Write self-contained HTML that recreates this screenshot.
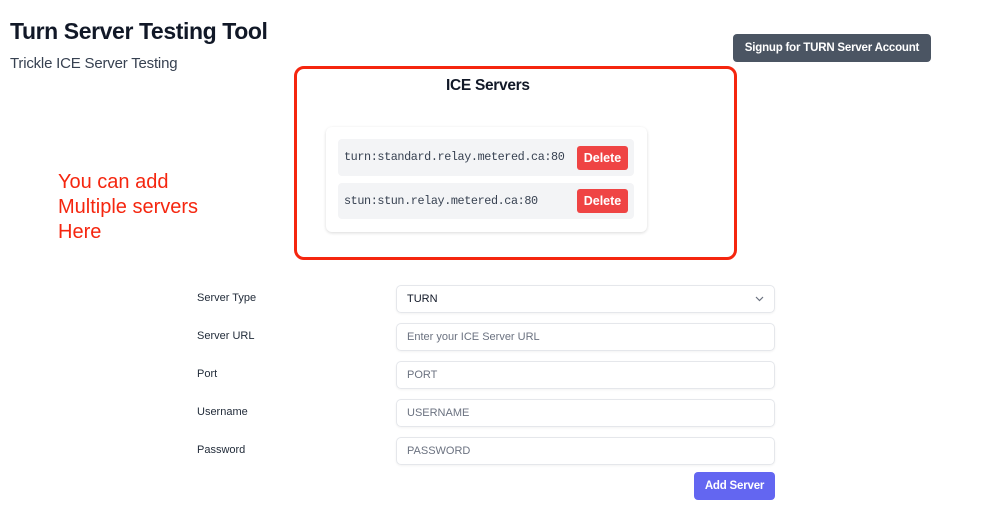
<!DOCTYPE html>
<html><head><style>
*{box-sizing:border-box;margin:0;padding:0}
body{width:1000px;height:515px;background:#fff;font-family:"Liberation Sans",sans-serif;position:relative;overflow:hidden;color:#111827}
.a{position:absolute}
h1{position:absolute;left:10px;top:18px;font-size:23px;font-weight:bold;color:#111827;letter-spacing:-0.4px}
.sub{left:10px;top:55px;font-size:15px;color:#374151;letter-spacing:-0.2px}
.signup{left:733px;top:34px;width:198px;height:28px;background:#4b5563;color:#fff;border-radius:4px;font-size:11.5px;font-weight:bold;text-align:center;line-height:28px;letter-spacing:-0.2px}
.red{left:294px;top:66px;width:443px;height:194px;border:3px solid #f5260f;border-radius:10px}
.ice{left:446px;top:77px;font-size:15.5px;font-weight:bold;letter-spacing:-0.3px}
.card{left:326px;top:127px;width:321px;height:105px;border-radius:6px;box-shadow:0 1px 3px rgba(0,0,0,.15)}
.row{left:338px;width:296px;background:#f3f4f6;border-radius:4px;font-family:"Liberation Mono",monospace;font-size:11.8px;letter-spacing:-0.4px;color:#374151;padding-left:6px}
.del{left:577px;width:51px;height:24px;background:#ef4444;color:#fff;border-radius:3px;font-size:12.5px;font-weight:bold;text-align:center;line-height:24px}
.note{left:58px;top:170px;font-size:20px;color:#f5260f;line-height:25px}
.lbl{left:197px;font-size:11px;color:#1f2937}
.inp{left:396px;width:379px;height:28px;border:1px solid #e5e7eb;border-radius:5px;font-size:11px;color:#6b7280;padding-left:10px;line-height:26px;box-shadow:0 1px 2px rgba(0,0,0,.05)}
.btn{left:694px;top:472px;width:81px;height:28px;background:#6366f1;color:#fff;border-radius:4px;font-size:11.5px;font-weight:bold;text-align:center;line-height:28px;letter-spacing:-0.2px}
</style></head><body>
<h1>Turn Server Testing Tool</h1>
<div class="a sub">Trickle ICE Server Testing</div>
<div class="a signup">Signup for TURN Server Account</div>
<div class="a red"></div>
<div class="a ice">ICE Servers</div>
<div class="a card"></div>
<div class="a row" style="top:139px;height:37px;line-height:37px">turn:standard.relay.metered.ca:80</div>
<div class="a del" style="top:146px">Delete</div>
<div class="a row" style="top:183px;height:36px;line-height:36px">stun:stun.relay.metered.ca:80</div>
<div class="a del" style="top:189px">Delete</div>
<div class="a note">You can add<br>Multiple servers<br>Here</div>
<div class="a lbl" style="top:292px">Server Type</div>
<div class="a lbl" style="top:330px">Server URL</div>
<div class="a lbl" style="top:368px">Port</div>
<div class="a lbl" style="top:406px">Username</div>
<div class="a lbl" style="top:444px">Password</div>
<div class="a inp" style="top:285px;color:#111827">TURN<svg class="a" style="right:10px;top:10px" width="9" height="6" viewBox="0 0 9 6"><path d="M1 1l3.5 3.5L8 1" fill="none" stroke="#6b7280" stroke-width="1.2"/></svg></div>
<div class="a inp" style="top:323px">Enter your ICE Server URL</div>
<div class="a inp" style="top:361px">PORT</div>
<div class="a inp" style="top:399px">USERNAME</div>
<div class="a inp" style="top:437px">PASSWORD</div>
<div class="a btn">Add Server</div>
</body></html>
